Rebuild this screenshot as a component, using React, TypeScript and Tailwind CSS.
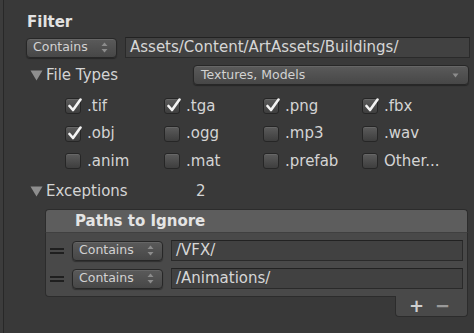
import React from 'react'

const types = [
  { label: '.tif', on: true },
  { label: '.tga', on: true },
  { label: '.png', on: true },
  { label: '.fbx', on: true },
  { label: '.obj', on: true },
  { label: '.ogg', on: false },
  { label: '.mp3', on: false },
  { label: '.wav', on: false },
  { label: '.anim', on: false },
  { label: '.mat', on: false },
  { label: '.prefab', on: false },
  { label: 'Other...', on: false },
]

function Stepper() {
  return (
    <svg width="7" height="11" viewBox="0 0 7 11" className="shrink-0">
      <path d="M3.5 0.5 L6.5 4 L0.5 4 Z" fill="#8c8c8c" />
      <path d="M3.5 10.5 L6.5 7 L0.5 7 Z" fill="#8c8c8c" />
    </svg>
  )
}

function Popup({ w, label }: { w: string; label: string }) {
  return (
    <div
      className={`${w} h-[20px] shrink-0 flex items-center justify-between pl-[6px] pr-[8px] rounded-[4px] border border-[#272727] bg-gradient-to-b from-[#5a5a5a] to-[#474747] shadow-[inset_0_1px_0_rgba(255,255,255,0.08),0_1px_1px_rgba(0,0,0,0.35)]`}
    >
      <span className="text-[12.5px] leading-none text-[#d2d2d2]">{label}</span>
      <Stepper />
    </div>
  )
}

function Field({ text, className = '' }: { text: string; className?: string }) {
  return (
    <div
      className={`h-[21px] flex items-center pl-[4px] bg-[#414141] border border-[#2a2a2a] border-t-[#222222] text-[15px] leading-none text-[#d6d6d6] ${className}`}
    >
      {text}
    </div>
  )
}

function Check({ on }: { on: boolean }) {
  return (
    <div className="relative w-[16px] h-[16px] shrink-0 rounded-[3px] border border-[#262626] bg-gradient-to-b from-[#5c5c5c] to-[#3e3e3e] shadow-[inset_0_1px_0_rgba(255,255,255,0.08)]">
      {on && (
        <svg
          width="16"
          height="15"
          viewBox="0 0 16 15"
          className="absolute left-[1px] -top-[1px]"
        >
          <path
            d="M2.5 8 L6 12 L13.5 1.5"
            fill="none"
            stroke="#f4f4f4"
            strokeWidth="2.6"
            strokeLinecap="round"
            strokeLinejoin="round"
          />
        </svg>
      )}
    </div>
  )
}

function Fold() {
  return (
    <svg width="13" height="11" viewBox="0 0 13 11" className="shrink-0">
      <path d="M0.5 0.5 L12.5 0.5 L6.5 10.5 Z" fill="#8e8e8e" />
    </svg>
  )
}

function Handle() {
  return (
    <div className="w-[14px] shrink-0 flex flex-col gap-[2px]">
      <div className="h-[2px] bg-[#1f1f1f]" />
      <div className="h-[2px] bg-[#1f1f1f]" />
    </div>
  )
}

export default function App() {
  return (
    <div className="w-[474px] h-[333px] overflow-hidden flex bg-[#393939] font-['DejaVu_Sans',sans-serif] text-[#d4d4d4]">
      <div className="w-[3px] bg-[#3c3c3c]" />
      <div className="w-px bg-[#282828]" />

      <div className="flex-1 flex flex-col pl-[22px] pr-[4px]">
        <div className="mt-[12px] h-[20px] pl-[1px] text-[15px] font-bold leading-[20px] text-[#e2e2e2]">
          Filter
        </div>

        {/* filter row */}
        <div className="mt-[5px] flex items-center gap-[8px]">
          <Popup w="w-[91px]" label="Contains" />
          <Field text="Assets/Content/ArtAssets/Buildings/" className="flex-1" />
        </div>

        {/* file types */}
        <div className="mt-[7px] h-[20px] flex items-center">
          <div className="w-[167px] flex items-center gap-[3px] pl-[4px]">
            <Fold />
            <span className="text-[15px] leading-none">File Types</span>
          </div>
          <div className="w-[276px] h-[20px] flex items-center justify-between pl-[7px] pr-[9px] rounded-[4px] border border-[#272727] bg-gradient-to-b from-[#5a5a5a] to-[#474747] shadow-[inset_0_1px_0_rgba(255,255,255,0.08),0_1px_1px_rgba(0,0,0,0.35)]">
            <span className="text-[12.5px] leading-none text-[#d2d2d2]">Textures, Models</span>
            <svg width="7" height="5" viewBox="0 0 7 5">
              <path d="M0.5 0.5 L6.5 0.5 L3.5 4.5 Z" fill="#8c8c8c" />
            </svg>
          </div>
        </div>

        <div className="mt-[13px] ml-[39px] grid grid-cols-[99px_99px_99px_99px] gap-y-[11.5px]">
          {types.map((t) => (
            <div key={t.label} className="flex items-center gap-[6px] h-[16px]">
              <Check on={t.on} />
              <span className="text-[15px] leading-none">{t.label}</span>
            </div>
          ))}
        </div>

        {/* exceptions */}
        <div className="mt-[13px] h-[18px] flex items-center">
          <div className="w-[170px] flex items-center gap-[3px] pl-[4px]">
            <Fold />
            <span className="text-[15px] leading-none">Exceptions</span>
          </div>
          <span className="text-[15px] leading-none">2</span>
        </div>

        <div className="mt-[9px] ml-[19px] w-[423px] flex flex-col">
          <div className="h-[23px] flex items-center pl-[29px] rounded-t-[4px] border border-[#2c2c2c] border-b-0 bg-[#5d5d5d] text-[15px] font-bold leading-none text-[#e4e4e4]">
            Paths to Ignore
          </div>
          <div className="flex flex-col gap-[7px] pt-[7px] pb-[7px] pl-[4px] pr-[4px] bg-[#494949] border border-[#2c2c2c] border-t-[#404040] rounded-bl-[4px]">
            <div className="flex items-center gap-[8px]">
              <Handle />
              <Popup w="w-[91px]" label="Contains" />
              <Field text="/VFX/" className="flex-1" />
            </div>
            <div className="flex items-center gap-[8px]">
              <Handle />
              <Popup w="w-[91px]" label="Contains" />
              <Field text="/Animations/" className="flex-1" />
            </div>
          </div>
          <div className="self-end w-[73px] h-[21px] -mt-px flex items-center justify-between pl-[13px] pr-[17px] bg-[#494949] border border-[#2c2c2c] border-t-0 rounded-b-[4px]">
            <span className="text-[18px] font-bold leading-none text-[#cfcfcf]">+</span>
            <span className="text-[18px] font-bold leading-none text-[#9a9a9a]">−</span>
          </div>
        </div>
      </div>
    </div>
  )
}
